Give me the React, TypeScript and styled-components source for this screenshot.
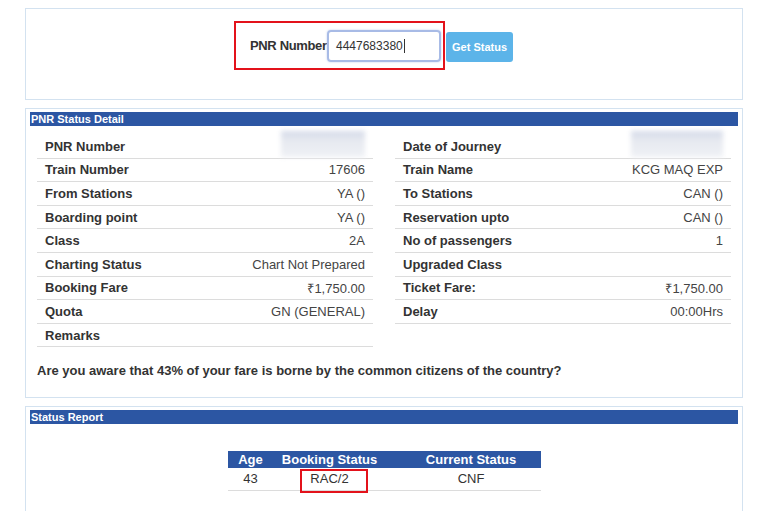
import React from "react";
import styled, { createGlobalStyle } from "styled-components";

const Global = createGlobalStyle`
  html, body { margin: 0; padding: 0; background: #fff; }
  body { font-family: "Liberation Sans", Arial, Helvetica, sans-serif; color: #333; }
  * { box-sizing: border-box; }
`;

const Page = styled.div`
  padding: 8px 25px 0 25px;
  display: flex;
  flex-direction: column;
  gap: 8px;
  height: 511px;
  overflow: hidden;
`;

const Panel = styled.section<{ $h?: number }>`
  border: 1px solid #d3e2f0;
  background: #fff;
  ${(p) => (p.$h ? `height: ${p.$h}px;` : "")}
  flex-shrink: 0;
`;

const SearchPanel = styled(Panel)`
  display: flex;
  align-items: flex-start;
  padding: 12px 0 0 208px;
`;

const Highlight = styled.div`
  display: flex;
  align-items: center;
  width: 211px;
  height: 49px;
  border: 2px solid #e3121b;
  padding: 0 2px 0 14px;
`;

const Label = styled.span`
  font-size: 13px;
  font-weight: 700;
  color: #333;
  white-space: nowrap;
  width: 77px;
  flex-shrink: 0;
  letter-spacing: -0.35px;
`;

const FakeInput = styled.div`
  width: 114px;
  flex-shrink: 0;
  height: 32px;
  border: 2px solid #a8bbe6;
  border-radius: 4px;
  box-shadow: 0 0 2px rgba(120, 150, 220, 0.5);
  display: flex;
  align-items: center;
  padding-left: 7px;
  font-size: 12px;
  color: #333;
`;

const Caret = styled.span`
  display: inline-block;
  width: 1px;
  height: 14px;
  background: #333;
  margin-left: 1px;
`;

const Button = styled.button`
  margin: 11px 0 0 1px;
  width: 67px;
  height: 30px;
  border: none;
  border-radius: 3px;
  background: #5cb4e9;
  color: #fff;
  font-family: "Liberation Sans", Arial, sans-serif;
  font-size: 11px;
  font-weight: 700;
  padding: 0;
`;

const HeaderBar = styled.div`
  margin: 3px 4px 0 4px;
  height: 14px;
  background: #2c56a3;
  color: #fff;
  font-size: 11px;
  font-weight: 700;
  line-height: 14px;
  padding-left: 1px;
`;

const Columns = styled.div`
  display: grid;
  grid-template-columns: 336px 336px;
  column-gap: 22px;
  padding: 9px 11px 0 11px;
  align-items: start;
`;

const List = styled.div`
  display: flex;
  flex-direction: column;
`;

const Row = styled.div`
  height: 23.6px;
  border-bottom: 1px solid #dcdcdc;
  display: flex;
  align-items: center;
  justify-content: space-between;
  padding: 0 8px;
  font-size: 13px;
`;

const RowLabel = styled.span`
  font-weight: 700;
  color: #333;
`;

const RowValue = styled.span`
  color: #444;
`;

const Redacted = styled.div<{ $w: number }>`
  width: ${(p) => p.$w}px;
  height: 26px;
  margin-top: -4px;
  background: linear-gradient(180deg, #d3d9e8 0%, #e6e9f0 35%, #eff1f5 100%);
  filter: blur(2.5px);
`;

const Question = styled.p`
  margin: 16px 0 0 11px;
  font-size: 13px;
  font-weight: 700;
  color: #333;
`;

const ReportBody = styled.div`
  display: flex;
  justify-content: center;
  padding-top: 27px;
`;

const Table = styled.div`
  width: 313px;
  display: grid;
  grid-template-columns: 46px 112px 155px;
`;

const Th = styled.div<{ $pl?: number }>`
  height: 17px;
  background: #2c56a3;
  color: #fff;
  font-size: 13px;
  font-weight: 700;
  text-align: center;
  line-height: 17px;
  padding-left: ${(p) => p.$pl || 0}px;
`;

const Td = styled.div<{ $pl?: number }>`
  height: 23px;
  border-bottom: 1px solid #dcdcdc;
  font-size: 13px;
  color: #333;
  text-align: center;
  line-height: 22px;
  padding-left: ${(p) => p.$pl || 0}px;
  position: relative;
`;

const Mark = styled.span`
  position: absolute;
  left: 26px;
  top: 1px;
  width: 68px;
  height: 24px;
  border: 2px solid #e3121b;
`;

const left: [string, React.ReactNode][] = [
  ["PNR Number", <Redacted $w={84} key="r1" />],
  ["Train Number", "17606"],
  ["From Stations", "YA ()"],
  ["Boarding point", "YA ()"],
  ["Class", "2A"],
  ["Charting Status", "Chart Not Prepared"],
  ["Booking Fare", "₹1,750.00"],
  ["Quota", "GN (GENERAL)"],
  ["Remarks", ""],
];

const right: [string, React.ReactNode][] = [
  ["Date of Journey", <Redacted $w={92} key="r2" />],
  ["Train Name", "KCG MAQ EXP"],
  ["To Stations", "CAN ()"],
  ["Reservation upto", "CAN ()"],
  ["No of passengers", "1"],
  ["Upgraded Class", ""],
  ["Ticket Fare:", "₹1,750.00"],
  ["Delay", "00:00Hrs"],
];

const DetailList = ({ rows }: { rows: [string, React.ReactNode][] }) => (
  <List>
    {rows.map(([k, v]) => (
      <Row key={k}>
        <RowLabel>{k}</RowLabel>
        {typeof v === "string" ? <RowValue>{v}</RowValue> : v}
      </Row>
    ))}
  </List>
);

export default function App() {
  return (
    <>
      <Global />
      <Page>
        <SearchPanel $h={92}>
          <Highlight>
            <Label>PNR Number</Label>
            <FakeInput>
              4447683380
              <Caret />
            </FakeInput>
          </Highlight>
          <Button>Get Status</Button>
        </SearchPanel>

        <Panel $h={290}>
          <HeaderBar>PNR Status Detail</HeaderBar>
          <Columns>
            <DetailList rows={left} />
            <DetailList rows={right} />
          </Columns>
          <Question>
            Are you aware that 43% of your fare is borne by the common citizens of the country?
          </Question>
        </Panel>

        <Panel $h={130}>
          <HeaderBar>Status Report</HeaderBar>
          <ReportBody>
            <Table>
              <Th>Age</Th>
              <Th>Booking Status</Th>
              <Th $pl={16}>Current Status</Th>
              <Td>43</Td>
              <Td>
                RAC/2
                <Mark />
              </Td>
              <Td $pl={16}>CNF</Td>
            </Table>
          </ReportBody>
        </Panel>
      </Page>
    </>
  );
}
